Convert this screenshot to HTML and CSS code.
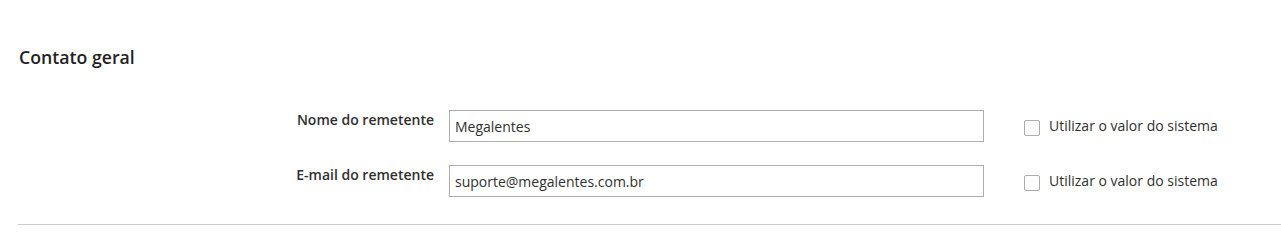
FILE: index.html
```html
<!DOCTYPE html>
<html lang="pt-BR">
<head>
<meta charset="utf-8">
<title>Contato geral</title>
<link rel="stylesheet" href="styles.css">
</head>
<body>
<section class="section">
  <h2 class="section-title">Contato geral</h2>
  <div class="fields">
    <div class="field">
      <label class="field-label" for="nome">Nome do remetente</label>
      <input class="field-input" id="nome" type="text" value="Megalentes">
      <label class="field-default"><span class="checkbox"></span><span class="default-text">Utilizar o valor do sistema</span></label>
    </div>
    <div class="field">
      <label class="field-label" for="email">E-mail do remetente</label>
      <input class="field-input" id="email" type="text" value="suporte@megalentes.com.br">
      <label class="field-default"><span class="checkbox"></span><span class="default-text">Utilizar o valor do sistema</span></label>
    </div>
  </div>
  <hr class="divider">
</section>
</body>
</html>
```

FILE: styles.css
```css
html, body {
  margin: 0;
  padding: 0;
  background: #ffffff;
}

body {
  font-family: "Open Sans", "Liberation Sans", sans-serif;
  color: #303030;
  font-size: 14px;
}

.section {
  padding: 45px 0 0 18px;
}

.section-title {
  margin: 0 0 0 1px;
  font-size: 17.7px;
  line-height: 24px;
  font-weight: 600;
  color: #1f1f1f;
}

.fields {
  margin-top: 41px;
  display: flex;
  flex-direction: column;
  gap: 23px;
}

.field {
  display: grid;
  grid-template-columns: 416px 535px auto;
  column-gap: 15px;
  align-items: start;
}

.field-label {
  text-align: right;
  font-weight: 600;
  font-size: 14px;
  line-height: 20px;
  padding-top: 0;
}

.field-input {
  box-sizing: border-box;
  width: 535px;
  height: 32px;
  margin: 0;
  padding: 0 5px;
  border: 1px solid #adadad;
  border-radius: 0;
  font-family: inherit;
  font-size: 14px;
  color: #303030;
  background: #ffffff;
  outline: none;
}

.field-default {
  display: flex;
  align-items: flex-start;
  gap: 9px;
  margin-left: 25px;
  padding-top: 6px;
  line-height: 20px;
  font-size: 14px;
}

.checkbox {
  box-sizing: border-box;
  width: 16px;
  height: 16px;
  margin-top: 4px;
  border: 1px solid #adadad;
  border-radius: 2px;
  background: #ffffff;
}

.divider {
  margin: 27px 0 0 0;
  border: 0;
  border-top: 1px solid #cccccc;
  height: 0;
}
```
